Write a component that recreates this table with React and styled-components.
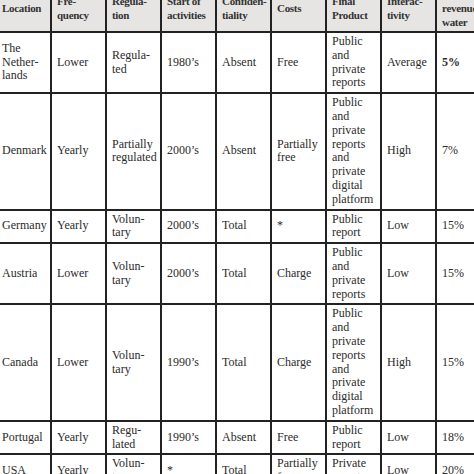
import React from 'react';
import styled, { createGlobalStyle } from 'styled-components';

const GlobalStyle = createGlobalStyle`
    html, body {
        margin: 0;
        padding: 0;
        background: #fff;
    }
`;

const Frame = styled.div`
    width: 474px;
    height: 474px;
    overflow: hidden;
    background: #fff;
`;

const Table = styled.table`
    border-collapse: collapse;
    table-layout: fixed;
    width: 550px;
    margin-left: -5px;
    margin-top: -17px;
    font-family: "Liberation Serif", "DejaVu Serif", serif;
    font-size: 12px;
    line-height: 13.8px;
    color: #2b2b2b;
`;

const Col = styled.col`
    width: 55px;
`;

const Head = styled.th`
    background: #e7e5e3;
    border: 2px solid #222;
    padding: 2px 3px 2px 5px;
    text-align: left;
    vertical-align: middle;
    font-weight: bold;
    font-size: 11px;
    letter-spacing: -0.3px;
    white-space: nowrap;
    line-height: 14px;
    color: #333;
`;

const Cell = styled.td`
    border: 2px solid #222;
    padding: 2px 3px 2px 5px;
    text-align: left;
    vertical-align: middle;
    white-space: nowrap;
    font-weight: ${(p) => (p.$bold ? 'bold' : 'normal')};
`;

const Lines = ({ text }) =>
    text.split('|').map((line, i, all) => (
        <React.Fragment key={i}>
            {line}
            {i < all.length - 1 && <br />}
        </React.Fragment>
    ));

const headers = [
    'Location',
    'Fre-|quency',
    'Regula-|tion',
    'Start of|activities',
    'Confiden-|tiality',
    'Costs',
    'Final|Product',
    'Interac-|tivity',
    'Non-|revenue|water',
    'Ref.',
];

const rows = [
    ['The|Nether-|lands', 'Lower', 'Regula-|ted', '1980’s', 'Absent', 'Free', 'Public|and|private|reports', 'Average', '5%', ''],
    ['Denmark', 'Yearly', 'Partially|regulated', '2000’s', 'Absent', 'Partially|free', 'Public|and|private|reports|and|private|digital|platform', 'High', '7%', ''],
    ['Germany', 'Yearly', 'Volun-|tary', '2000’s', 'Total', '*', 'Public|report', 'Low', '15%', ''],
    ['Austria', 'Lower', 'Volun-|tary', '2000’s', 'Total', 'Charge', 'Public|and|private|reports', 'Low', '15%', ''],
    ['Canada', 'Lower', 'Volun-|tary', '1990’s', 'Total', 'Charge', 'Public|and|private|reports|and|private|digital|platform', 'High', '15%', ''],
    ['Portugal', 'Yearly', 'Regu-|lated', '1990’s', 'Absent', 'Free', 'Public|report', 'Low', '18%', ''],
    ['USA', 'Yearly', 'Volun-|tary', '*', 'Total', 'Partially|free', 'Private|reports', 'Low', '20%', ''],
];

const App = () => (
    <Frame>
        <GlobalStyle />
        <Table>
            <colgroup>
                {headers.map((h) => (
                    <Col key={h} />
                ))}
            </colgroup>
            <thead>
                <tr>
                    {headers.map((h) => (
                        <Head key={h}>
                            <Lines text={h} />
                        </Head>
                    ))}
                </tr>
            </thead>
            <tbody>
                {rows.map((row, r) => (
                    <tr key={r}>
                        {row.map((cell, c) => (
                            <Cell key={c} $bold={r === 0 && c === 8}>
                                <Lines text={cell} />
                            </Cell>
                        ))}
                    </tr>
                ))}
            </tbody>
        </Table>
    </Frame>
);

export default App;
